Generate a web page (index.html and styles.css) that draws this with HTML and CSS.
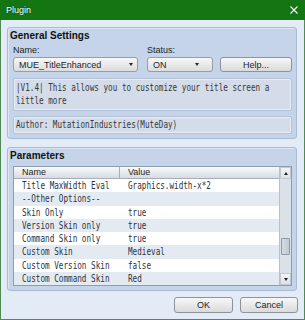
FILE: index.html
```html
<!DOCTYPE html>
<html lang="en">
<head>
    <meta charset="UTF-8">
    <title>Plugin</title>
    <link rel="stylesheet" href="styles.css">
</head>
<body>
<div class="window">
    <div class="titlebar">
        <span class="title">Plugin</span>
        <svg class="close" width="8" height="8" viewBox="0 0 8 8"><path d="M0.5 0.5L7.5 7.5M7.5 0.5L0.5 7.5" stroke="#fff" stroke-width="1.1"/></svg>
    </div>
    <div class="content">
        <section class="group general">
            <h2>General Settings</h2>
            <div class="fields">
                <div class="field name-field">
                    <label>Name:</label>
                    <div class="select">MUE_TitleEnhanced<span class="arrow"></span></div>
                </div>
                <div class="field status-field">
                    <label>Status:</label>
                    <div class="select">ON<span class="arrow"></span></div>
                </div>
                <button class="btn help">Help...</button>
            </div>
            <div class="box desc">
                <div class="mono-block">|V1.4| This allows you to customize your title screen a little more</div>
            </div>
            <div class="box author">
                <div class="mono-block">Author: MutationIndustries(MuteDay)</div>
            </div>
        </section>

        <section class="group params">
            <h2>Parameters</h2>
            <div class="list">
                <div class="list-main">
                    <div class="list-head"><div>Name</div><div>Value</div></div>
                    <div class="row"><div><span class="mono">Title MaxWidth Eval</span></div><div><span class="mono">Graphics.width-x*2</span></div></div>
                    <div class="row"><div><span class="mono">--Other Options--</span></div><div></div></div>
                    <div class="row"><div><span class="mono">Skin Only</span></div><div><span class="mono">true</span></div></div>
                    <div class="row"><div><span class="mono">Version Skin only</span></div><div><span class="mono">true</span></div></div>
                    <div class="row"><div><span class="mono">Command Skin only</span></div><div><span class="mono">true</span></div></div>
                    <div class="row"><div><span class="mono">Custom Skin</span></div><div><span class="mono">Medieval</span></div></div>
                    <div class="row"><div><span class="mono">Custom Version Skin</span></div><div><span class="mono">false</span></div></div>
                    <div class="row"><div><span class="mono">Custom Command Skin</span></div><div><span class="mono">Red</span></div></div>
                </div>
                <div class="scrollbar">
                    <div class="sb-btn"><span class="tri up"></span></div>
                    <div class="sb-track"><div class="thumb"></div></div>
                    <div class="sb-btn"><span class="tri down"></span></div>
                </div>
            </div>
        </section>

        <div class="footer">
            <button class="btn ok">OK</button>
            <button class="btn cancel">Cancel</button>
        </div>
    </div>
</div>
</body>
</html>
```

FILE: styles.css
```css
* {
    box-sizing: border-box;
}
body {
    margin: 0;
    font-family: "Liberation Sans", Arial, sans-serif;
    font-size: 9px;
    color: #1e1e1e;
}
.window {
    width: 305px;
    height: 320px;
    border: 1px solid #4f8a55;
    border-top: none;
    background: #e3ebf6;
}
.titlebar {
    height: 20px;
    margin: 0 -1px;
    padding: 0 7px 0 6px;
    display: flex;
    align-items: center;
    justify-content: space-between;
    background: #137613;
    color: #fff;
}
.title {
    font-size: 9px;
    text-shadow: 0 0 2px rgba(0, 0, 0, 0.45);
}
.content {
    padding: 7px 7px 6px 6px;
}
.group {
    background: #c5d4e8;
    border: 1px solid #a9bbd3;
    border-radius: 3px;
    box-shadow: inset 1px 1px 0 #dde7f3;
    padding: 1px 4px 4px 5px;
}
.group h2 {
    margin: 0 0 0 -3px;
    font-size: 10px;
    line-height: 14px;
    font-weight: bold;
    color: #111;
}
.params {
    margin-top: 8px;
}
.fields {
    display: flex;
    align-items: flex-end;
    margin-top: 2px;
}
.field label {
    display: block;
    line-height: 11px;
    margin-bottom: 1px;
}
.name-field {
    width: 125px;
}
.status-field {
    width: 66px;
    margin-left: 9px;
}
.select {
    height: 15px;
    border: 1px solid #989ca3;
    border-radius: 3px;
    background: linear-gradient(#f7f7f7, #dcdcdc);
    padding: 0 4px 0 5px;
    display: flex;
    align-items: center;
    justify-content: space-between;
}
.status-field .select {
    padding-right: 13px;
}
.arrow {
    width: 0;
    height: 0;
    border-left: 2.5px solid transparent;
    border-right: 2.5px solid transparent;
    border-top: 3px solid #222;
}
.btn {
    font: inherit;
    color: #1e1e1e;
    border: 1px solid #8e939a;
    border-radius: 3px;
    background: linear-gradient(#f7f7f7, #dadada);
    padding: 0;
}
.help {
    width: 72px;
    height: 15px;
    margin-left: 7px;
}
.box {
    border: 1px solid #b3c2d6;
    border-radius: 2px;
    background: #d3dce8;
    box-shadow: inset 0 0 0 1px #e8eef6;
    overflow: hidden;
}
.desc {
    height: 33px;
    margin-top: 6px;
    padding: 1.5px 2px;
}
.author {
    height: 18px;
    margin-top: 5px;
    padding: 0 2px;
}
.author .mono-block {
    line-height: 16px;
}
.mono-block {
    width: calc(100% / 0.765);
    transform: scaleX(0.765);
    transform-origin: 0 0;
    font-family: "DejaVu Sans Mono", monospace;
    font-size: 10px;
    line-height: 13.5px;
    color: #383838;
}
.mono {
    display: inline-block;
    white-space: nowrap;
    transform: scaleX(0.765);
    transform-origin: 0 50%;
    font-family: "DejaVu Sans Mono", monospace;
    font-size: 10px;
    color: #2d3340;
}
.list {
    display: flex;
    height: 120px;
    margin-top: 3px;
    border: 1px solid #8f9cae;
    background: #fff;
}
.list-main {
    flex: 1;
}
.list-head {
    display: grid;
    grid-template-columns: 106px 1fr;
    height: 12px;
    line-height: 11px;
    border-bottom: 1px solid #a6aebb;
    background: linear-gradient(#f8f9fa, #d7dbe1);
}
.list-head div {
    padding-left: 8px;
}
.list-head div:first-child {
    border-right: 1px solid #a6aebb;
}
.row {
    display: grid;
    grid-template-columns: 106px 1fr;
    height: 13.25px;
    line-height: 13.25px;
}
.row div {
    padding-left: 8px;
}
.row:nth-child(odd) {
    background: #e4eaf2;
}
.scrollbar {
    width: 12px;
    display: flex;
    flex-direction: column;
    border-left: 1px solid #b7c0cc;
    background: #dbe1e8;
}
.sb-btn {
    height: 12px;
    display: flex;
    align-items: center;
    justify-content: center;
    background: linear-gradient(#f3f4f6, #dde1e6);
    border: 1px solid #c2c9d2;
}
.sb-track {
    flex: 1;
    padding: 59px 1px 0;
}
.thumb {
    height: 17px;
    border: 1px solid #8d99a8;
    border-radius: 1px;
    background: linear-gradient(90deg, #d6dbe2, #c3cad3);
}
.tri {
    width: 0;
    height: 0;
    border-left: 2px solid transparent;
    border-right: 2px solid transparent;
}
.tri.up {
    border-bottom: 3px solid #222;
}
.tri.down {
    border-top: 3px solid #222;
}
.footer {
    display: flex;
    justify-content: flex-end;
    gap: 7px;
    margin-top: 6px;
    margin-right: -1px;
}
.ok {
    width: 59px;
    height: 16px;
}
.cancel {
    width: 58px;
    height: 16px;
}
```
